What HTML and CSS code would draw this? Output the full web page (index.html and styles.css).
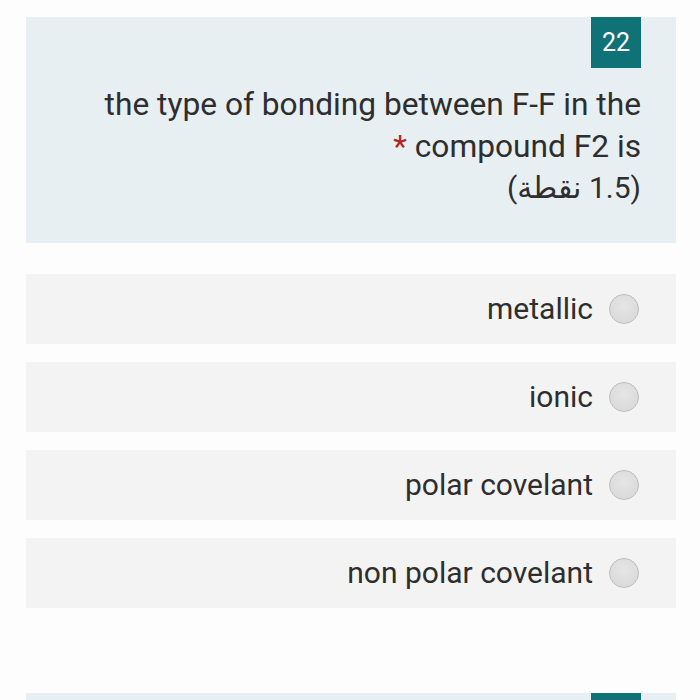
FILE: index.html
```html
<!DOCTYPE html>
<html lang="en">
<head>
<meta charset="utf-8">
<link rel="stylesheet" href="styles.css">
</head>
<body>
<div class="page">
  <section class="question" dir="rtl">
    <div class="badge-row"><span class="badge">22</span></div>
    <div class="title">the type of bonding between F-F in the compound F2 is <span class="req">*</span></div>
    <div class="points">(1.5 نقطة)</div>
  </section>

  <div class="options" dir="rtl">
    <label class="option"><span class="radio"></span><span class="label">metallic</span></label>
    <label class="option"><span class="radio"></span><span class="label">ionic</span></label>
    <label class="option"><span class="radio"></span><span class="label">polar covelant</span></label>
    <label class="option"><span class="radio"></span><span class="label">non polar covelant</span></label>
  </div>

  <section class="next" dir="rtl">
    <span class="next-badge"></span>
  </section>
</div>
</body>
</html>
```

FILE: styles.css
```css
html, body {
  margin: 0;
  padding: 0;
  background: #fdfdfd;
}
html {
  height: 700px;
  overflow: hidden;
}
body {
  font-family: Roboto, "Noto Sans", "DejaVu Sans", sans-serif;
  color: #2e2e2e;
  height: 700px;
  overflow: hidden;
}
.page {
  padding: 17px 24px 0 26px;
  display: flex;
  flex-direction: column;
}
.question {
  background: #e8eff3;
  padding: 0 35px 34px 35px;
  text-align: right;
}
.badge-row {
  display: flex;
}
.badge {
  width: 50px;
  height: 51px;
  background: #0f7276;
  color: #ffffff;
  font-size: 25px;
  display: flex;
  align-items: center;
  justify-content: center;
}
.title {
  margin-top: 16px;
  font-size: 31.7px;
  line-height: 41.5px;
}
.req {
  color: #b3261e;
}
.points {
  font-size: 30px;
  line-height: 41.5px;
  color: #2e2e2e;
}
.options {
  margin-top: 31px;
  display: flex;
  flex-direction: column;
  gap: 18px;
}
.option {
  background: #f3f3f3;
  height: 70px;
  display: flex;
  align-items: center;
  padding-right: 37px;
  gap: 16px;
}
.radio {
  width: 28px;
  height: 28px;
  border-radius: 50%;
  border: 1px solid #bdbdbd;
  background: radial-gradient(circle at 50% 40%, #e6e6e6, #d6d6d6);
  flex: none;
}
.label {
  font-size: 30px;
}
.next {
  margin-top: 85px;
  height: 8px;
  background: #e8eff3;
  padding: 0 35px;
  display: flex;
}
.next-badge {
  width: 50px;
  height: 8px;
  background: #0f7276;
}
```
